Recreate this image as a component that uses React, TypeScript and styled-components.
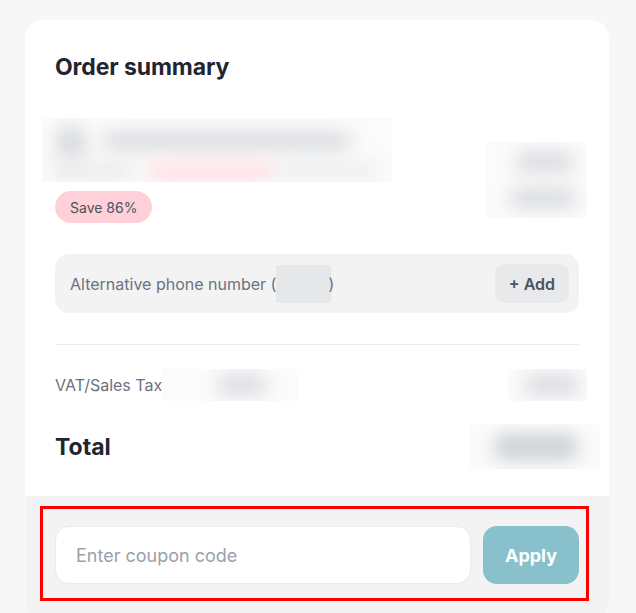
import React from "react";
import styled, { createGlobalStyle } from "styled-components";

const GlobalStyle = createGlobalStyle`
  html, body {
    margin: 0;
    padding: 0;
    background: #f7f7f7;
    font-family: Inter, "Noto Sans", sans-serif;
    -webkit-font-smoothing: antialiased;
  }
`;

const Card = styled.section`
  width: 584px;
  margin: 20px 0 0 25px;
  background: #ffffff;
  border-radius: 18px;
  overflow: hidden;
`;

const Body = styled.div`
  display: flex;
  flex-direction: column;
  padding: 32px 30px 27px 30px;
`;

const Title = styled.h2`
  margin: 0;
  font-size: 23px;
  line-height: 30px;
  font-weight: 700;
  color: #1f2533;
  letter-spacing: -0.1px;
`;

const ItemRow = styled.div`
  display: flex;
  justify-content: space-between;
  margin-top: 36px;
  margin-left: -13px;
`;

const ItemInfo = styled.div`
  display: flex;
  flex-direction: column;
  align-items: flex-start;
  gap: 9px;
`;

const Blur = styled.div<{ $w: number; $h: number }>`
  position: relative;
  width: ${(p) => p.$w}px;
  height: ${(p) => p.$h}px;
  overflow: hidden;
  background: #fbfbfb;
`;

const Smudge = styled.div<{ $x: number; $y: number; $w: number; $h: number; $c?: string }>`
  position: absolute;
  left: ${(p) => p.$x}px;
  top: ${(p) => p.$y}px;
  width: ${(p) => p.$w}px;
  height: ${(p) => p.$h}px;
  border-radius: 10px;
  background: ${(p) => p.$c || "#d9dbdf"};
  filter: blur(9px);
`;

const SaveBadge = styled.span`
  margin-left: 13px;
  padding: 0 15px;
  height: 32px;
  display: inline-flex;
  align-items: center;
  border-radius: 16px;
  background: #ffd0d7;
  color: #4b5262;
  font-size: 14px;
`;

const PriceCol = styled.div`
  margin-top: 24px;
  margin-right: -8px;
`;

const PhoneBox = styled.div`
  margin-top: 31px;
  height: 59px;
  display: flex;
  align-items: center;
  justify-content: space-between;
  padding: 0 10px 0 15px;
  border-radius: 14px;
  background: #f3f3f4;
`;

const PhoneLabel = styled.span`
  display: flex;
  align-items: center;
  font-size: 16px;
  color: #6b7280;
`;

const Masked = styled.span`
  display: inline-block;
  width: 55px;
  height: 38px;
  margin: 0 -3px 0 0;
  background: #e6e7e9;
`;

const AddButton = styled.button`
  height: 39px;
  padding: 0 14px;
  border: none;
  border-radius: 10px;
  background: #e8e9eb;
  color: #4b5262;
  font-family: inherit;
  font-size: 16px;
  font-weight: 600;
`;

const Divider = styled.hr`
  margin: 31px 0 0 0;
  border: none;
  border-top: 1px solid #ececee;
`;

const Line = styled.div<{ $top: number }>`
  display: flex;
  align-items: center;
  justify-content: space-between;
  margin-top: ${(p) => p.$top}px;
`;

const LineLabel = styled.span`
  display: flex;
  align-items: center;
  font-size: 16px;
  color: #6b7280;
`;

const LineValue = styled.span<{ $shift: number }>`
  margin-right: ${(p) => -p.$shift}px;
`;

const TotalLabel = styled.span`
  font-size: 23px;
  font-weight: 700;
  color: #1f2533;
`;

const Footer = styled.div`
  background: #f3f3f4;
  padding: 10px 20px 20px 15px;
`;

const CouponForm = styled.form`
  display: flex;
  gap: 12px;
  margin: 0;
  padding: 17px 7px 14px 12px;
  border: 3px solid #ff0000;
`;

const CouponInput = styled.input`
  flex: 1;
  height: 58px;
  box-sizing: border-box;
  padding: 0 20px;
  border: 1px solid #ebebed;
  border-radius: 14px;
  background: #ffffff;
  font-family: inherit;
  font-size: 18px;
  color: #1f2533;
  outline: none;
  &::placeholder {
    color: #9ca0a8;
  }
`;

const ApplyButton = styled.button`
  width: 96px;
  height: 58px;
  border: none;
  border-radius: 14px;
  background: #88c0cb;
  color: #ffffff;
  font-family: inherit;
  font-size: 18px;
  font-weight: 700;
`;

export default function App() {
  return (
    <>
      <GlobalStyle />
      <Card>
        <Body>
          <Title>Order summary</Title>
          <ItemRow>
            <ItemInfo>
              <Blur $w={350} $h={64}>
                <Smudge $x={14} $y={8} $w={30} $h={34} />
                <Smudge $x={60} $y={14} $w={250} $h={18} />
                <Smudge $x={10} $y={46} $w={80} $h={14} $c="#e6e7e9" />
                <Smudge $x={104} $y={44} $w={130} $h={18} $c="#ffdfe3" />
                <Smudge $x={236} $y={46} $w={100} $h={14} $c="#ebecee" />
              </Blur>
              <SaveBadge>Save 86%</SaveBadge>
            </ItemInfo>
            <PriceCol>
              <Blur $w={102} $h={76}>
                <Smudge $x={30} $y={10} $w={60} $h={20} />
                <Smudge $x={24} $y={46} $w={68} $h={20} />
              </Blur>
            </PriceCol>
          </ItemRow>
          <PhoneBox>
            <PhoneLabel>
              Alternative phone number (<Masked />)
            </PhoneLabel>
            <AddButton type="button">+ Add</AddButton>
          </PhoneBox>
          <Divider />
          <Line $top={24}>
            <LineLabel>
              VAT/Sales Tax
              <Blur $w={135} $h={32}>
                <Smudge $x={55} $y={6} $w={50} $h={20} />
              </Blur>
            </LineLabel>
            <LineValue $shift={8}>
              <Blur $w={79} $h={32}>
                <Smudge $x={16} $y={6} $w={56} $h={20} />
              </Blur>
            </LineValue>
          </Line>
          <Line $top={23}>
            <TotalLabel>Total</TotalLabel>
            <LineValue $shift={21}>
              <Blur $w={130} $h={45}>
                <Smudge $x={24} $y={10} $w={84} $h={26} $c="#cdd0d5" />
              </Blur>
            </LineValue>
          </Line>
        </Body>
        <Footer>
          <CouponForm onSubmit={(e) => e.preventDefault()}>
            <CouponInput placeholder="Enter coupon code" />
            <ApplyButton type="submit">Apply</ApplyButton>
          </CouponForm>
        </Footer>
      </Card>
    </>
  );
}
